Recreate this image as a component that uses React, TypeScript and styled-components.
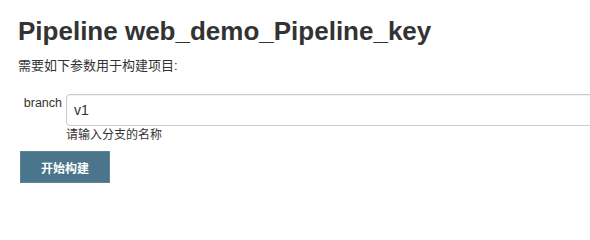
import React from "react";
import styled, { createGlobalStyle } from "styled-components";

const Global = createGlobalStyle`
  html, body { margin: 0; padding: 0; background: #fff; overflow: hidden; }
  body { font-family: "Liberation Sans", "Noto Sans CJK SC", Arial, sans-serif; color: #333; }
`;

const Page = styled.div`
  padding: 16px 0 0 18px;
  width: 590px;
  box-sizing: border-box;
`;

const Title = styled.h1`
  margin: 0;
  font-size: 26px;
  line-height: 30px;
  font-weight: bold;
  color: #333;
  white-space: nowrap;
`;

const Intro = styled.p`
  margin: 11px 0 0 0;
  font-size: 13px;
  line-height: 18px;
  color: #333;
`;

const ParamRow = styled.div`
  display: grid;
  grid-template-columns: 44px 600px;
  column-gap: 4px;
  margin-top: 19px;
  align-items: start;
`;

const Label = styled.label`
  font-size: 12.5px;
  line-height: 16px;
  padding-top: 1px;
  text-align: right;
  color: #333;
`;

const Field = styled.div`
  display: flex;
  flex-direction: column;
`;

const Input = styled.input`
  box-sizing: border-box;
  height: 32px;
  width: 600px;
  border: 1px solid #ccc;
  border-radius: 4px;
  padding: 0 7px;
  font-family: "Liberation Sans", Arial, sans-serif;
  font-size: 14px;
  color: #333;
  box-shadow: inset 0 1px 1px rgba(0, 0, 0, 0.06);
  outline: none;
`;

const Help = styled.div`
  font-size: 12px;
  line-height: 16px;
  margin-top: 1px;
  color: #333;
`;

const BuildButton = styled.button`
  margin: 8px 0 0 2px;
  width: 90px;
  height: 32px;
  background: #4b758b;
  border: 1px solid #5d8599;
  color: #fff;
  font-family: "Liberation Sans", "Noto Sans CJK SC", sans-serif;
  font-size: 12px;
  font-weight: bold;
  cursor: pointer;
  padding: 0;
`;

export default function App() {
  return (
    <>
      <Global />
      <Page>
        <Title>Pipeline web_demo_Pipeline_key</Title>
        <Intro>需要如下参数用于构建项目:</Intro>
        <ParamRow>
          <Label>branch</Label>
          <Field>
            <Input defaultValue="v1" />
            <Help>请输入分支的名称</Help>
          </Field>
        </ParamRow>
        <BuildButton>开始构建</BuildButton>
      </Page>
    </>
  );
}
